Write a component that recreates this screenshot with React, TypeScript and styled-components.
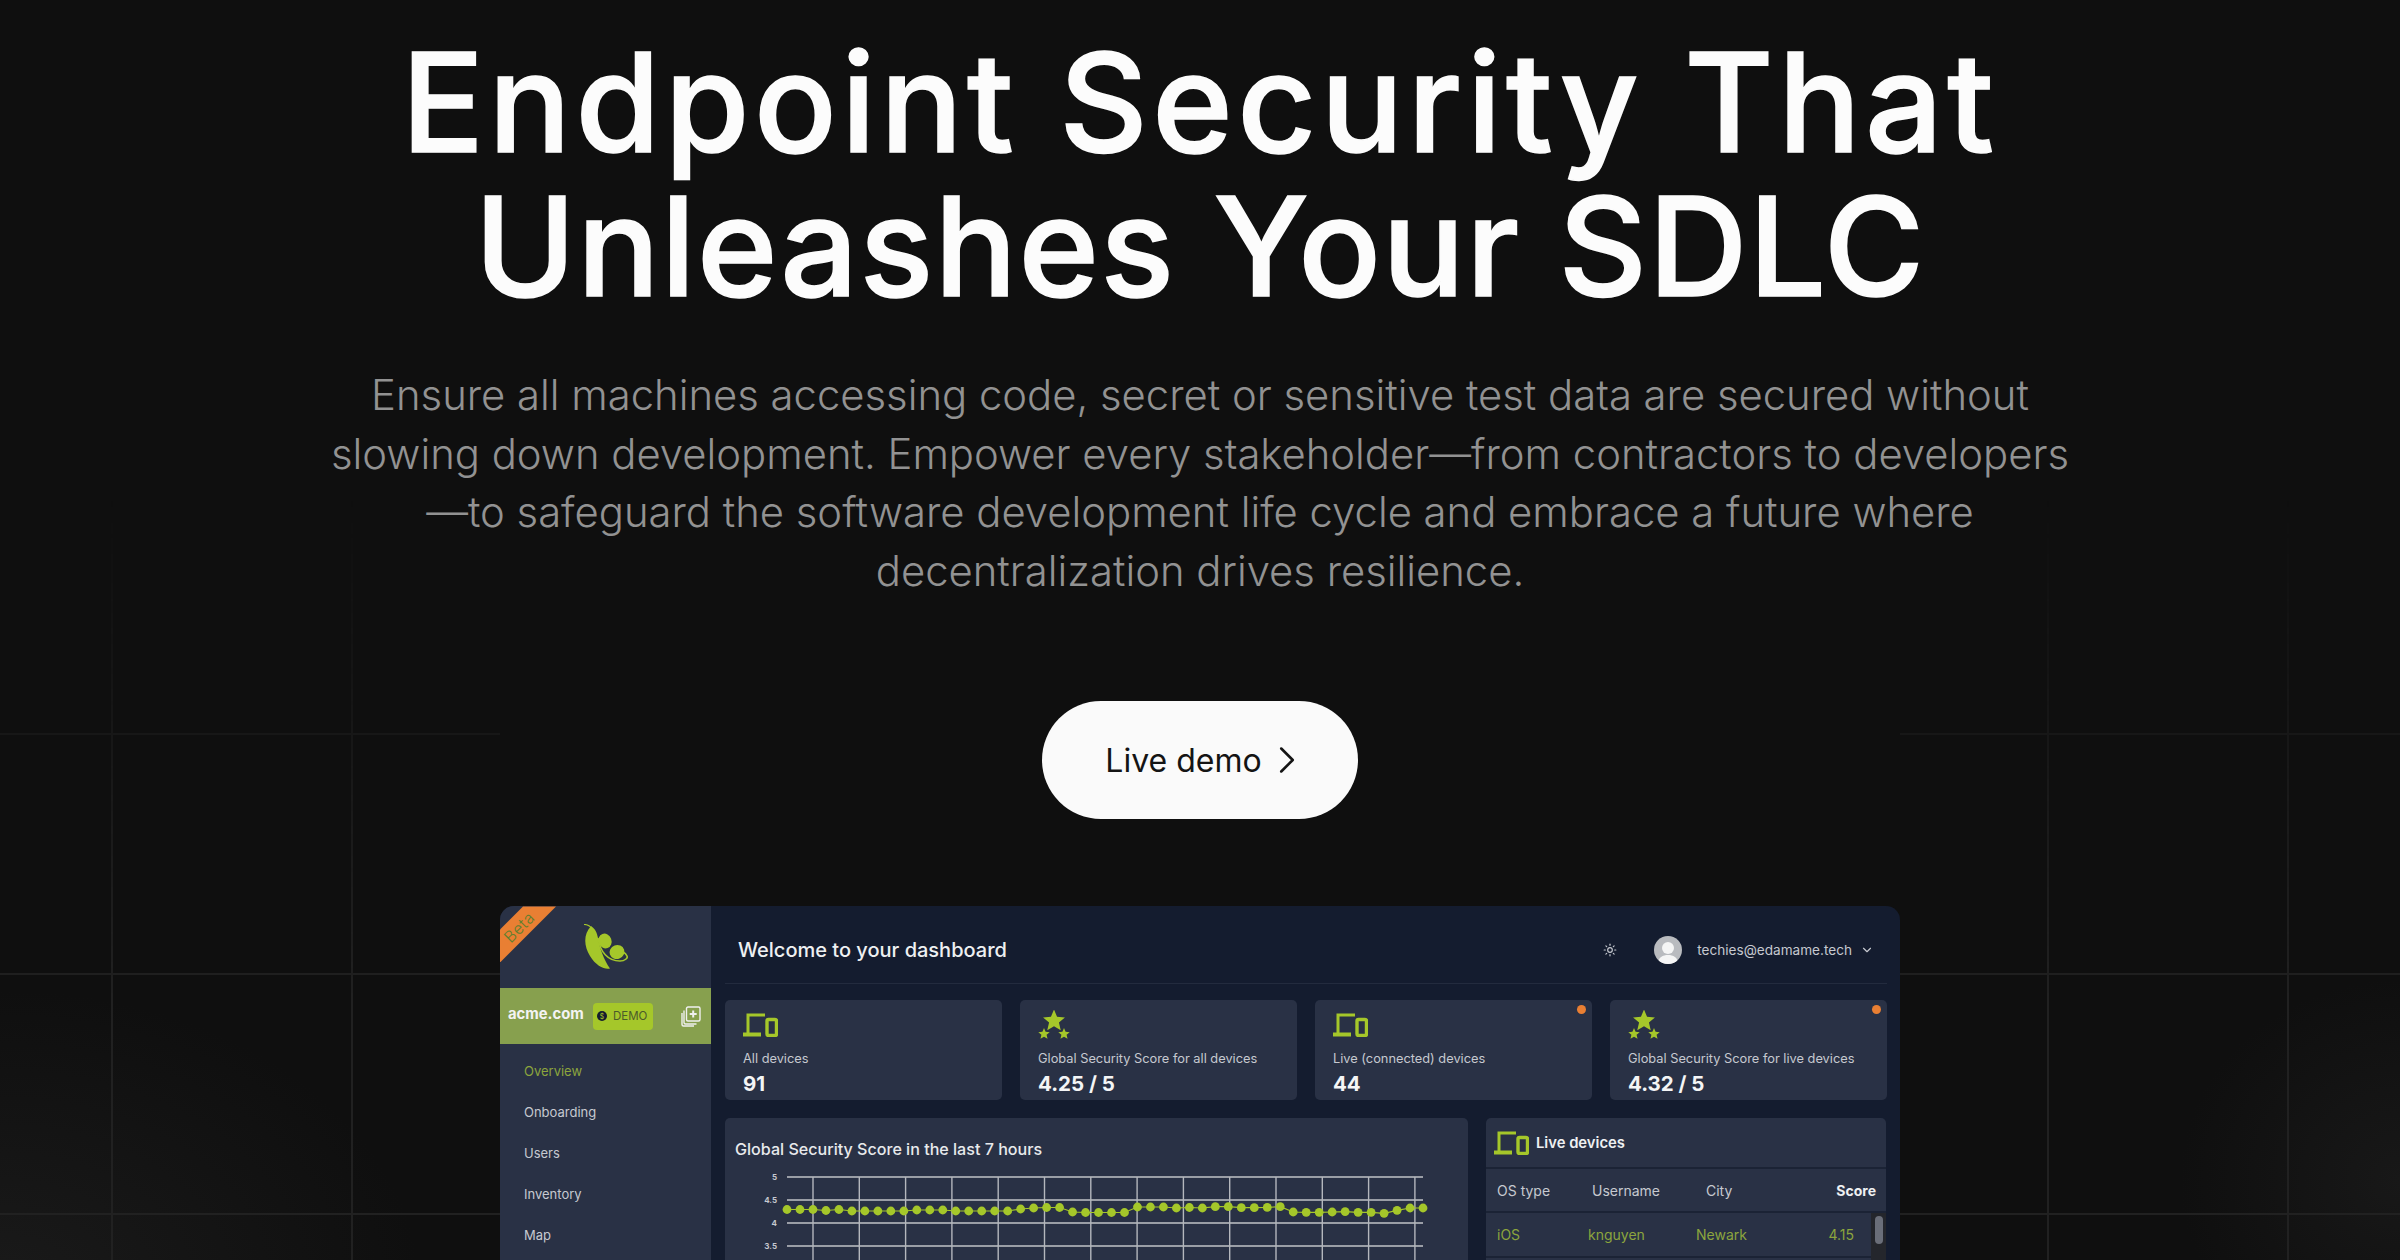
import React from 'react';
import styled, { createGlobalStyle } from 'styled-components';
import { ChevronDown, ChevronRight, Sun } from 'lucide-react';

const GlobalStyle = createGlobalStyle`
    html, body {
        margin: 0;
        background: #0f0f0f;
    }
    * {
        box-sizing: border-box;
    }
`;

const Page = styled.div`
    position: relative;
    height: 1260px;
    overflow: hidden;
    background:
        radial-gradient(ellipse 420px 300px at 0 1290px, #1a1a1a 0%, transparent 100%),
        radial-gradient(ellipse 220px 200px at 2400px 1180px, #181818 0%, transparent 100%),
        #0f0f0f;
    font-family: 'Inter', 'Liberation Sans', sans-serif;
`;

// faint grid behind everything, one strip for each side of the page
const GridStrip = styled.div<{ $side: 'left' | 'right' }>`
    position: absolute;
    top: 0;
    bottom: 0;
    width: 500px;
    ${(p) => p.$side}: 0;
    background-image:
        linear-gradient(to right, #212121 2px, transparent 2px),
        linear-gradient(to bottom, #212121 2px, transparent 2px);
    background-size: 240px 240px;
    background-position: ${(p) => (p.$side === 'left' ? '111px 13px' : '147px 13px')};
    mask-image: linear-gradient(to bottom, transparent 500px, #000 1000px);
`;

const Hero = styled.main`
    position: relative;
    display: flex;
    flex-direction: column;
    align-items: center;
    padding-top: 30px;
`;

const Heading = styled.h1`
    margin: 0;
    font-size: 137px;
    line-height: 144px;
    font-weight: 500;
    -webkit-text-stroke: 1.6px #fcfcfc;
    text-align: center;
    color: #fcfcfc;
`;

const HeadingLine = styled.span<{ $spacing: number }>`
    display: block;
    letter-spacing: ${(p) => p.$spacing}px;
`;

const Lead = styled.p`
    margin: 48px 0 0;
    font-size: 41.8px;
    line-height: 58.6px;
    font-weight: 300;
    text-align: center;
    color: #929292;
`;

const DemoButton = styled.a`
    display: flex;
    align-items: center;
    justify-content: center;
    gap: 2px;
    width: 316px;
    height: 118px;
    margin-top: 101px;
    border-radius: 59px;
    background: #fafafa;
    color: #141414;
    font-size: 32px;
    font-weight: 400;
`;

const DemoChevron = styled(ChevronRight)`
    margin-right: -15px;
`;

const Dashboard = styled.section`
    display: grid;
    grid-template-columns: 211px 1fr;
    width: 1400px;
    height: 500px;
    margin-top: 87px;
    border-radius: 14px 14px 0 0;
    overflow: hidden;
    background: #141c2f;
`;

const Sidebar = styled.aside`
    position: relative;
    background: #293145;
`;

const Ribbon = styled.div`
    position: absolute;
    top: 0;
    left: 0;
    width: 56px;
    height: 56px;
    background: #e97f33;
    clip-path: polygon(23px 0, 56px 0, 0 56px, 0 23px);
`;

const RibbonText = styled.span`
    position: absolute;
    top: 11px;
    left: 0;
    width: 38px;
    transform: rotate(-45deg);
    text-align: center;
    font-size: 16px;
    font-weight: 300;
    letter-spacing: 0.5px;
    color: #5f7f2e;
`;

const LogoBox = styled.div`
    display: flex;
    justify-content: center;
    height: 82px;
    padding-top: 18px;
`;

const OrgBar = styled.div`
    display: flex;
    align-items: center;
    justify-content: space-between;
    height: 56px;
    padding: 0 10px 0 8px;
    background: #87a04e;
`;

const OrgName = styled.span`
    width: 85px;
    font-size: 14.8px;
    font-weight: 700;
    color: #f3f3f3;
    margin-top: -4px;
`;

const DemoBadge = styled.span`
    display: flex;
    align-items: center;
    gap: 6px;
    width: 60px;
    height: 27px;
    padding-left: 4px;
    margin-right: auto;
    border-radius: 4px;
    background: #a5c72a;
    font-size: 11.5px;
    color: #4b5a2a;
`;

const Coin = styled.span`
    display: flex;
    align-items: center;
    justify-content: center;
    width: 10px;
    height: 10px;
    border-radius: 50%;
    background: #141c2f;
    color: #a5c72a;
    font-size: 7px;
`;

const NavList = styled.nav`
    display: flex;
    flex-direction: column;
    gap: 25px;
    padding: 19px 0 0 24px;
`;

const NavItem = styled.a<{ $active?: boolean }>`
    font-size: 13px;
    line-height: 16px;
    color: ${(p) => (p.$active ? '#8ca53d' : '#c6c9d0')};
`;

const Content = styled.div`
    padding: 0 14px;
`;

const TopBar = styled.header`
    display: flex;
    align-items: center;
    height: 78px;
    padding: 10px 13px 0 13px;
    border-bottom: 1px solid #232b3e;
`;

const PageTitle = styled.h2`
    flex: 1;
    margin: 0;
    font-size: 20px;
    font-weight: 500;
    color: #eef0f2;
`;

const Avatar = styled.span`
    display: flex;
    align-items: flex-end;
    justify-content: center;
    width: 28px;
    height: 28px;
    margin: 0 15px 0 37px;
    border-radius: 50%;
    background: #b9bbbf;
    overflow: hidden;
`;

const Email = styled.span`
    font-size: 13.6px;
    color: #c6c9d0;
    margin-right: 8px;
`;

const StatRow = styled.div`
    display: grid;
    grid-template-columns: repeat(4, 277px);
    gap: 18px;
    margin-top: 16px;
`;

const StatCard = styled.div`
    position: relative;
    height: 100px;
    padding: 13px 18px 0;
    border-radius: 5px;
    background: #293145;
`;

const IconSlot = styled.div`
    display: flex;
    align-items: center;
    height: 24px;
`;

const LiveDot = styled.span`
    position: absolute;
    top: 5px;
    right: 6px;
    width: 9px;
    height: 9px;
    border-radius: 50%;
    background: #e97f33;
`;

const StatLabel = styled.div`
    margin-top: 14px;
    font-size: 12.8px;
    line-height: 16px;
    color: #c6c9d0;
`;

const StatValue = styled.div`
    margin-top: 4px;
    font-size: 20.5px;
    line-height: 26px;
    font-weight: 700;
    color: #f4f5f6;
`;

const LowerRow = styled.div`
    display: grid;
    grid-template-columns: 743px 400px;
    gap: 18px;
    margin-top: 18px;
`;

const ChartCard = styled.div`
    height: 300px;
    padding: 21px 0 0 10px;
    border-radius: 5px 5px 0 0;
    background: #293145;
`;

const ChartTitle = styled.h3`
    margin: 0;
    font-size: 16.1px;
    line-height: 20px;
    font-weight: 500;
    color: #e8eaec;
`;

const ChartSvg = styled.svg`
    display: block;
    margin-top: 1px;
`;

const DevicesCard = styled.div`
    height: 300px;
    border-radius: 5px 5px 0 0;
    overflow: hidden;
    background: #293145;
`;

const DevicesHead = styled.div`
    display: flex;
    align-items: center;
    gap: 7px;
    height: 49px;
    padding-left: 8px;
    font-size: 14.8px;
    font-weight: 600;
    color: #eef0f2;
`;

const TableHead = styled.div`
    display: grid;
    grid-template-columns: 95px 114px 1fr auto;
    align-items: center;
    height: 46px;
    padding: 0 10px 0 11px;
    border-top: 2px solid #1b2335;
    border-bottom: 2px solid #1b2335;
    font-size: 14px;
    color: #c6c9d0;
`;

const ScoreHead = styled.span`
    font-weight: 700;
    color: #eef0f2;
`;

const TableBody = styled.div`
    position: relative;
    padding-right: 15px;
`;

const TableRow = styled.div`
    display: grid;
    grid-template-columns: 91px 108px 1fr auto;
    align-items: center;
    height: 45px;
    padding: 0 17px 0 11px;
    border-bottom: 2px solid #1b2335;
    font-size: 14px;
    color: #8ca53d;
`;

const ScrollTrack = styled.div`
    position: absolute;
    top: 0;
    right: 0;
    bottom: -20px;
    width: 15px;
    padding: 3px 3px 0 4px;
    background: #24262c;
`;

const ScrollThumb = styled.div`
    height: 28px;
    border-radius: 4px;
    background: #6a6e79;
`;

const DevicesIcon = () => (
    <svg width="35" height="24" viewBox="0 0 35 24" fill="none" stroke="#a5c72a">
        <path d="M22 2H5V20" strokeWidth="3" />
        <path d="M0 21.5H18" strokeWidth="4" />
        <rect x="24" y="6.5" width="9.5" height="16" rx="1.5" strokeWidth="3.4" />
    </svg>
);

const starPoints = (cx: number, cy: number, r: number) =>
    Array.from({ length: 10 }, (_, i) => {
        const rad = i % 2 === 0 ? r : r * 0.45;
        const a = (Math.PI / 5) * i - Math.PI / 2;
        return `${cx + rad * Math.cos(a)},${cy + rad * Math.sin(a)}`;
    }).join(' ');

const StarsIcon = () => (
    <svg width="32" height="30" viewBox="0 0 32 30" fill="#a5c72a">
        <polygon points={starPoints(16, 11, 11.5)} />
        <polygon points={starPoints(6, 24, 6)} />
        <polygon points={starPoints(26, 24, 6)} />
    </svg>
);

const Logo = () => (
    <svg width="44" height="46" viewBox="0 0 44 46" fill="none">
        <path d="M0 0.5C3 0.5 6 2 7.5 4.5" stroke="#a5c72a" strokeWidth="1.2" />
        <path
            d="M7 2C11.5 5 13 9 14 14C15.5 24 20 36 26 44.5C21 46 12 42 6 32C0 22 -1 11 7 2Z"
            fill="#a5c72a"
        />
        <ellipse cx="21" cy="17" rx="6.5" ry="7.5" transform="rotate(-20 21 17)" fill="#a5c72a" />
        <ellipse cx="33" cy="28" rx="7.5" ry="7" transform="rotate(-20 33 28)" fill="#a5c72a" />
        <path d="M14 14C16 28 24 37 36 37C41 37 44 34 43 32C42 30 41 29 40 28.5" stroke="#a5c72a" strokeWidth="1.6" />
    </svg>
);

const CopyPlusIcon = () => (
    <svg width="20" height="21" viewBox="0 0 20 21" fill="none" stroke="#f0f0f0" strokeWidth="1.4">
        <rect x="5.5" y="1" width="13.5" height="14" rx="1.5" />
        <path d="M12.2 4.5V11.5M8.7 8H15.7" strokeWidth="2" />
        <path d="M3 4.5V16.5C3 17.3 3.7 18 4.5 18H15.5" />
        <path d="M1 7V18.5C1 19.3 1.7 20 2.5 20H13" />
    </svg>
);

// y pixel of every dot on the chart, counted from the top of the plot
const scoreDots = [
    1209.5, 1209.5, 1209.5, 1210.5, 1209.5, 1211, 1211, 1211, 1211, 1211, 1210, 1210, 1210, 1211, 1211, 1211, 1211,
    1211, 1209, 1208, 1207.5, 1207.5, 1212, 1212.5, 1212.5, 1212.5, 1212.5, 1207, 1207, 1207, 1208, 1207.5, 1208,
    1206.7, 1206.7, 1207.7, 1207.7, 1207.4, 1206.7, 1212, 1212.3, 1212.3, 1212, 1211.6, 1212.3, 1212.3, 1213.3,
    1210.3, 1208, 1208,
].map((y) => y - 1160);

const GRID_LEFT = 52;
const ScoreChart = () => {
    const ticks = [
        { label: '5', y: 17 },
        { label: '4.5', y: 40 },
        { label: '4', y: 63 },
        { label: '3.5', y: 86 },
    ];
    const verticals = Array.from({ length: 14 }, (_, i) => GRID_LEFT + 26 + i * 46.3);
    const points = scoreDots.map((y, i) => ({ x: GRID_LEFT + i * 12.98, y }));
    return (
        <ChartSvg width="700" height="200" viewBox="0 0 700 200">
            {ticks.map((t) => (
                <g key={t.label}>
                    <line x1={GRID_LEFT} x2={GRID_LEFT + 636} y1={t.y} y2={t.y} stroke="#9a9ea6" strokeWidth="1.8" />
                    <text
                        x={GRID_LEFT - 10}
                        y={t.y + 3}
                        textAnchor="end"
                        fontSize="8"
                        fontWeight="700"
                        fill="#c6c9d0"
                        fontFamily="Inter, sans-serif"
                    >
                        {t.label}
                    </text>
                </g>
            ))}
            {verticals.map((x) => (
                <line key={x} x1={x} x2={x} y1={17} y2={200} stroke="#b4b7bd" strokeWidth="1.4" />
            ))}
            <polyline
                points={points.map((p) => `${p.x},${p.y}`).join(' ')}
                fill="none"
                stroke="#a5c72a"
                strokeWidth="1.2"
            />
            {points.map((p) => (
                <circle key={p.x} cx={p.x} cy={p.y} r="4.4" fill="#a5c72a" />
            ))}
        </ChartSvg>
    );
};

const App = () => (
    <Page>
        <GlobalStyle />
        <GridStrip $side="left" />
        <GridStrip $side="right" />
        <Hero>
            <Heading>
                <HeadingLine $spacing={4.5}>Endpoint Security That</HeadingLine>
                <HeadingLine $spacing={1.4}>Unleashes Your SDLC</HeadingLine>
            </Heading>
            <Lead>
                Ensure all machines accessing code, secret or sensitive test data are secured without
                <br />
                slowing down development. Empower every stakeholder—from contractors to developers
                <br />
                —to safeguard the software development life cycle and embrace a future where
                <br />
                decentralization drives resilience.
            </Lead>
            <DemoButton>
                Live demo
                <DemoChevron size={46} strokeWidth={1.35} />
            </DemoButton>
            <Dashboard>
                <Sidebar>
                    <Ribbon />
                    <RibbonText>Beta</RibbonText>
                    <LogoBox>
                        <Logo />
                    </LogoBox>
                    <OrgBar>
                        <OrgName>acme.com</OrgName>
                        <DemoBadge>
                            <Coin>$</Coin>
                            DEMO
                        </DemoBadge>
                        <CopyPlusIcon />
                    </OrgBar>
                    <NavList>
                        <NavItem $active>Overview</NavItem>
                        <NavItem>Onboarding</NavItem>
                        <NavItem>Users</NavItem>
                        <NavItem>Inventory</NavItem>
                        <NavItem>Map</NavItem>
                    </NavList>
                </Sidebar>
                <Content>
                    <TopBar>
                        <PageTitle>Welcome to your dashboard</PageTitle>
                        <Sun size={14} color="#c6c9d0" />
                        <Avatar>
                            <svg width="22" height="24" viewBox="0 0 22 24" fill="#f5f5f5">
                                <circle cx="11" cy="8" r="6" />
                                <path d="M1 24C1 17 6 15 11 15C16 15 21 17 21 24Z" />
                            </svg>
                        </Avatar>
                        <Email>techies@edamame.tech</Email>
                        <ChevronDown size={14} color="#c6c9d0" />
                    </TopBar>
                    <StatRow>
                        <StatCard>
                            <IconSlot>
                                <DevicesIcon />
                            </IconSlot>
                            <StatLabel>All devices</StatLabel>
                            <StatValue>91</StatValue>
                        </StatCard>
                        <StatCard>
                            <IconSlot>
                                <StarsIcon />
                            </IconSlot>
                            <StatLabel>Global Security Score for all devices</StatLabel>
                            <StatValue>4.25 / 5</StatValue>
                        </StatCard>
                        <StatCard>
                            <LiveDot />
                            <IconSlot>
                                <DevicesIcon />
                            </IconSlot>
                            <StatLabel>Live (connected) devices</StatLabel>
                            <StatValue>44</StatValue>
                        </StatCard>
                        <StatCard>
                            <LiveDot />
                            <IconSlot>
                                <StarsIcon />
                            </IconSlot>
                            <StatLabel>Global Security Score for live devices</StatLabel>
                            <StatValue>4.32 / 5</StatValue>
                        </StatCard>
                    </StatRow>
                    <LowerRow>
                        <ChartCard>
                            <ChartTitle>Global Security Score in the last 7 hours</ChartTitle>
                            <ScoreChart />
                        </ChartCard>
                        <DevicesCard>
                            <DevicesHead>
                                <DevicesIcon />
                                Live devices
                            </DevicesHead>
                            <TableHead>
                                <span>OS type</span>
                                <span>Username</span>
                                <span>City</span>
                                <ScoreHead>Score</ScoreHead>
                            </TableHead>
                            <TableBody>
                                <TableRow>
                                    <span>iOS</span>
                                    <span>knguyen</span>
                                    <span>Newark</span>
                                    <span>4.15</span>
                                </TableRow>
                                <ScrollTrack>
                                    <ScrollThumb />
                                </ScrollTrack>
                            </TableBody>
                        </DevicesCard>
                    </LowerRow>
                </Content>
            </Dashboard>
        </Hero>
    </Page>
);

export default App;
